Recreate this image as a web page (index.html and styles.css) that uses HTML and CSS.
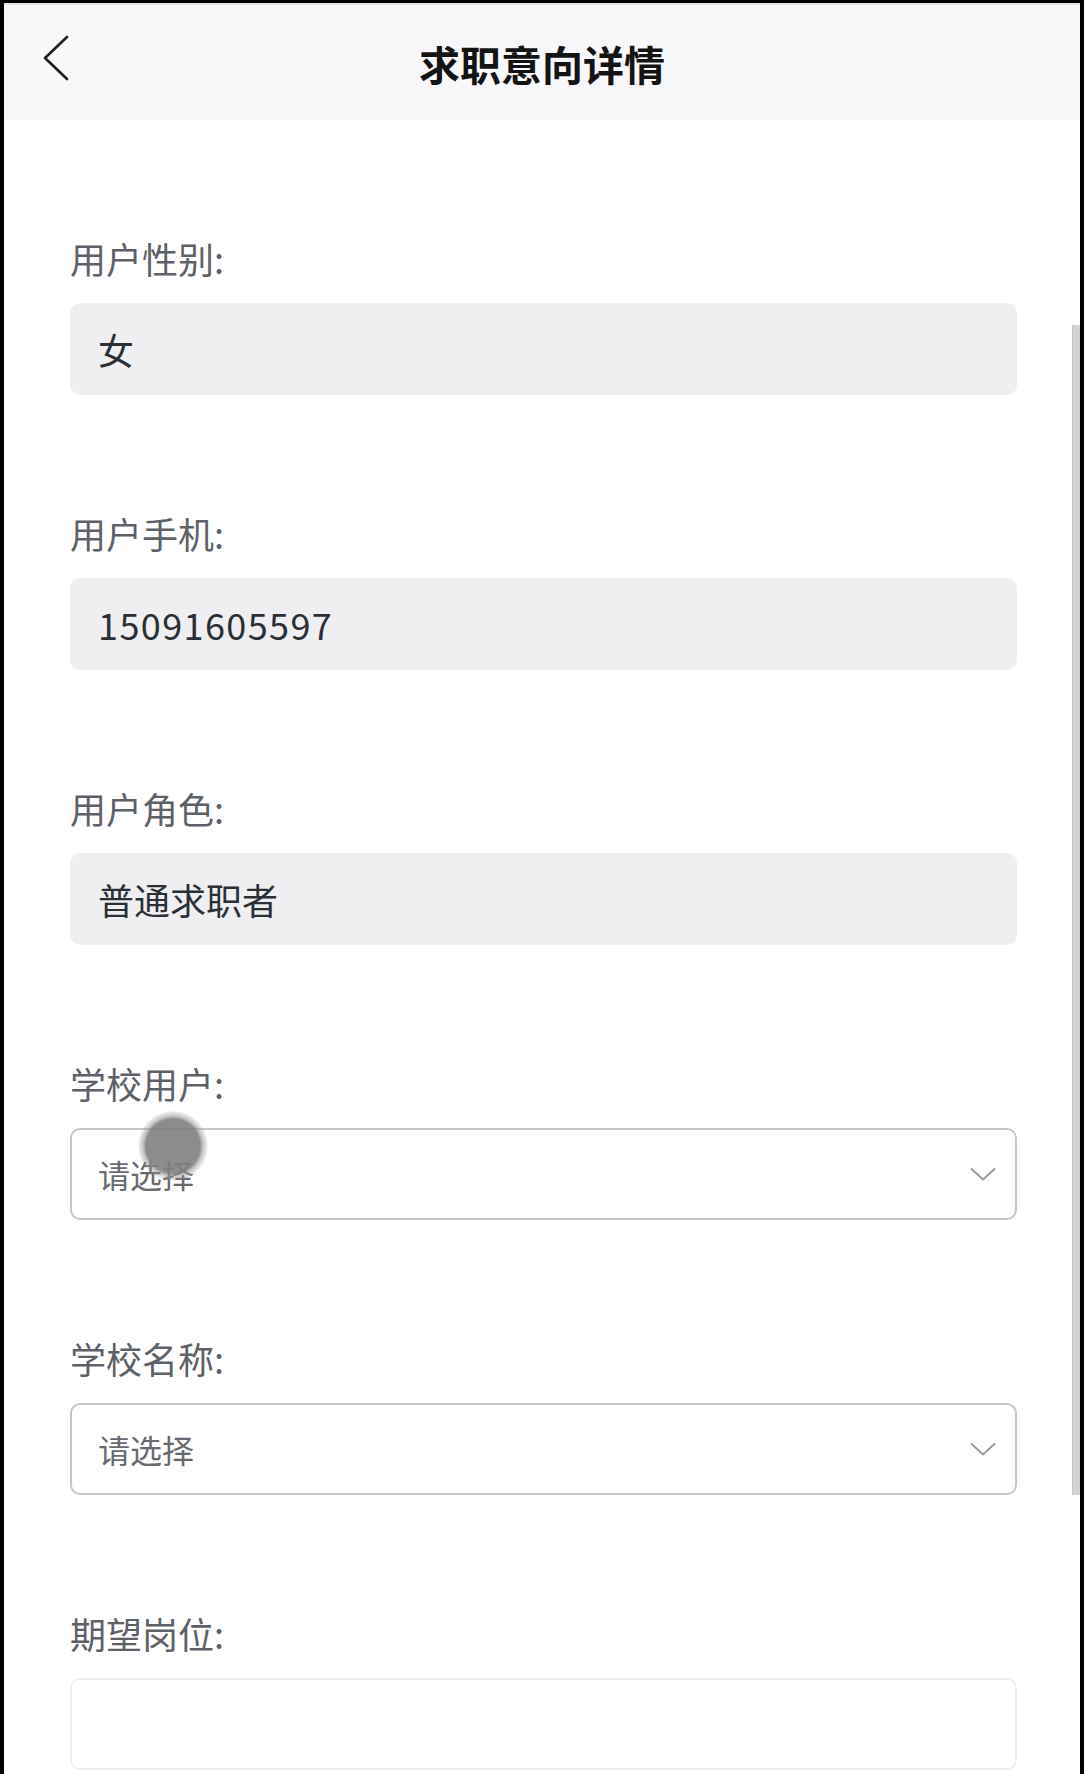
FILE: index.html
```html
<!DOCTYPE html>
<html lang="zh-CN">
<head>
    <meta charset="UTF-8">
    <title>求职意向详情</title>
    <link rel="stylesheet" href="styles.css">
</head>
<body>
<div class="screen">
    <div class="topbar">
        <span class="back">
            <svg width="28" height="46" viewBox="0 0 28 46"><polyline points="25,2 3,23 25,44" fill="none" stroke="#1e1e1e" stroke-width="2.6" stroke-linecap="round" stroke-linejoin="round"/></svg>
        </span>
        <h1 class="title">求职意向详情</h1>
        <span></span>
    </div>
    <div class="form">
        <div class="item">
            <div class="label">用户性别:</div>
            <div class="field filled">女</div>
        </div>
        <div class="item">
            <div class="label">用户手机:</div>
            <div class="field filled num">15091605597</div>
        </div>
        <div class="item">
            <div class="label">用户角色:</div>
            <div class="field filled">普通求职者</div>
        </div>
        <div class="item">
            <div class="label">学校用户:</div>
            <div class="field select">
                <span class="placeholder">请选择</span>
                <svg width="26" height="14" viewBox="0 0 26 14"><polyline points="1,1.5 13,12.5 25,1.5" fill="none" stroke="#9a9a9e" stroke-width="2"/></svg>
            </div>
        </div>
        <div class="item">
            <div class="label">学校名称:</div>
            <div class="field select">
                <span class="placeholder">请选择</span>
                <svg width="26" height="14" viewBox="0 0 26 14"><polyline points="1,1.5 13,12.5 25,1.5" fill="none" stroke="#9a9a9e" stroke-width="2"/></svg>
            </div>
        </div>
        <div class="item">
            <div class="label">期望岗位:</div>
            <div class="field empty"></div>
        </div>
    </div>
    <!-- 滚动条 -->
    <div class="scrollbar"></div>
    <!-- 触摸点 -->
    <div class="touch"></div>
</div>
</body>
</html>
```

FILE: styles.css
```css
*{
    margin: 0;
    padding: 0;
    box-sizing: border-box;
}
body{
    background: #000;
    font-family: "Noto Sans CJK SC", "Noto Sans", sans-serif;
}
.screen{
    margin: 3px 4px 0 4px;
    background: #fff;
    min-height: 1771px;
    position: relative;
    overflow: hidden;
}
.topbar{
    height: 117px;
    background: #f8f7f9;
    border-top: 2px solid #e7e5ea;
    display: grid;
    grid-template-columns: 1fr auto 1fr;
    align-items: center;
}
.back{
    padding-left: 38px;
    padding-bottom: 9px;
    display: flex;
    align-items: center;
}
.title{
    font-size: 41px;
    font-weight: 700;
    color: #141414;
}
.form{
    padding: 0 63px 0 66px;
}
.item{
    padding-top: 113px;
}
.label{
    font-size: 36px;
    line-height: 50px;
    color: #5e6167;
    margin-bottom: 20px;
}
.field{
    height: 92px;
    border-radius: 10px;
    padding: 0 28px;
    display: flex;
    align-items: center;
    font-size: 36px;
    color: #2b2f36;
}
.filled{
    background: #efeff1;
}
.num{
    letter-spacing: 1.4px;
}
.select{
    border: 2px solid #c9c6ca;
    justify-content: space-between;
    padding: 0 19px 0 26px;
}
.placeholder{
    color: #686a70;
    font-size: 32px;
}
.empty{
    border: 2px solid #efeff0;
}
.scrollbar{
    position: absolute;
    right: 0;
    top: 322px;
    width: 8px;
    height: 1170px;
    background: #d3d2d5;
    border-left: 1px solid #c4c3c6;
}
.touch{
    position: absolute;
    left: 137px;
    top: 1111px;
    width: 70px;
    height: 70px;
    margin: -3px 0 0 -3px;
    border-radius: 50%;
    background: radial-gradient(circle, rgba(128,128,128,0.9) 0, rgba(128,128,128,0.9) 27px, rgba(150,150,150,0.55) 30px, rgba(170,170,170,0.1) 35px);
}
```
